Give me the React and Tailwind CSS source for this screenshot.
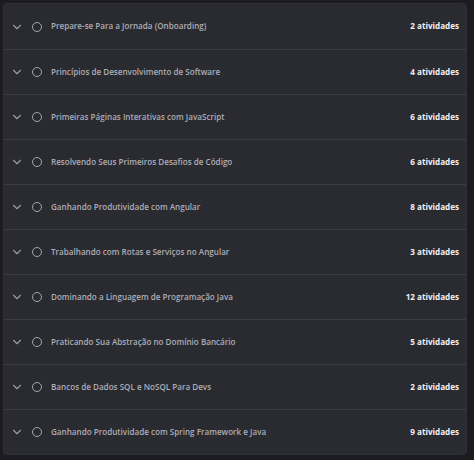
import { ChevronDown } from "lucide-react";

const modules = [
  { title: "Prepare-se Para a Jornada (Onboarding)", count: 2 },
  { title: "Princípios de Desenvolvimento de Software", count: 4 },
  { title: "Primeiras Páginas Interativas com JavaScript", count: 6 },
  { title: "Resolvendo Seus Primeiros Desafios de Código", count: 6 },
  { title: "Ganhando Produtividade com Angular", count: 8 },
  { title: "Trabalhando com Rotas e Serviços no Angular", count: 3 },
  { title: "Dominando a Linguagem de Programação Java", count: 12 },
  { title: "Praticando Sua Abstração no Domínio Bancário", count: 5 },
  { title: "Bancos de Dados SQL e NoSQL Para Devs", count: 2 },
  { title: "Ganhando Produtividade com Spring Framework e Java", count: 9 },
];

export default function App() {
  return (
    <div className="w-[474px] h-[460px] bg-[#1b1b20] pt-[3px] pl-[3px] font-['Open_Sans',sans-serif]">
      <div className="w-[464px] rounded-[4px] bg-[#2a2a31] border border-[#303038] overflow-hidden">
        {modules.map((m, i) => (
          <div
            key={m.title}
            className={`h-[45px] flex items-center pl-[6px] pr-[7px] ${i > 0 ? "border-t border-[#3b3b43]" : ""}`}
          >
            <ChevronDown size={14} strokeWidth={2} className="text-[#9a9aa3]" />
            <span className="ml-[8px] w-[10px] h-[10px] rounded-full border-[1.5px] border-[#a5a5ad]" />
            <span className="ml-[9px] text-[8.1px] font-semibold text-[#adadb5]">{m.title}</span>
            <span className="ml-auto text-[8.1px] font-bold text-[#f1f1f3]">{m.count} atividades</span>
          </div>
        ))}
      </div>
    </div>
  );
}
